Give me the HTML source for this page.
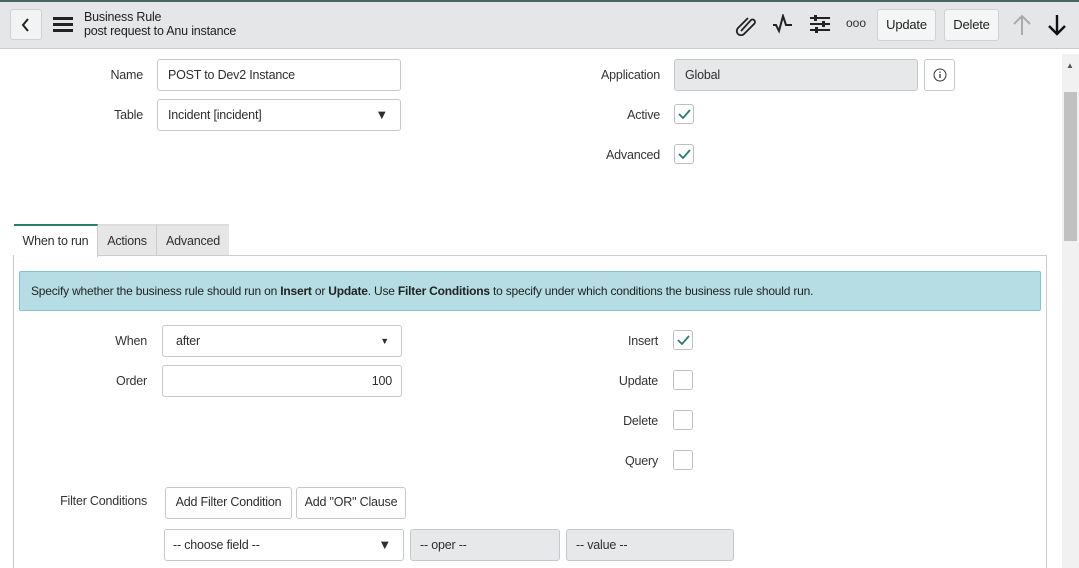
<!DOCTYPE html>
<html><head><style>
*{box-sizing:border-box;margin:0;padding:0}
html,body{width:1079px;height:568px;overflow:hidden}
body{background:#fff;font-family:"Liberation Sans",sans-serif;font-size:12px;color:#2e2e2e;position:relative;letter-spacing:-0.2px}
.a{position:absolute}
.hdr{left:0;top:0;width:1079px;height:49px;background:#e4e6e7;border-top:2px solid #4a6660;border-bottom:1px solid #c9cbcc}
.btn{position:absolute;background:#f4f5f5;border:1px solid #cfd1d2;border-radius:3px;text-align:center;font-size:13px;line-height:29px;color:#222}
.inp{position:absolute;height:32px;border:1px solid #c6c9cb;border-radius:3px;background:#fff;padding-left:10px;line-height:30px;font-size:12.5px}
.ro{background:#e6e8ea}
.lbl{position:absolute;text-align:right;font-size:12.5px;color:#333}
.cb{position:absolute;width:20px;height:20px;border:1px solid #bcc0c2;border-radius:3px;background:#fff}
.cb svg{position:absolute;left:3px;top:4px}
.tri{position:absolute;right:12px;top:0;font-size:11px}
.wb{position:absolute;background:#fff;border:1px solid #c6c9cb;border-radius:3px;text-align:center;line-height:29px;font-size:12.5px}
</style></head><body>
<div class="a hdr"></div>
<div class="btn" style="left:10px;top:9px;width:32px;height:31px;background:#f2f3f3"><svg width="12" height="14" viewBox="0 0 12 14" style="margin-top:8px"><path d="M8 1L3 7l5 6" stroke="#222" stroke-width="2" fill="none"/></svg></div>
<div class="a" style="left:53px;top:17px;width:20px;height:3px;background:#222"></div>
<div class="a" style="left:53px;top:23px;width:20px;height:3px;background:#222"></div>
<div class="a" style="left:53px;top:29px;width:20px;height:3px;background:#222"></div>
<div class="a" style="left:84px;top:10px;font-size:12.5px;line-height:14px;color:#222">Business Rule<br>post request to Anu instance</div>
<svg class="a" style="left:735px;top:14px" width="22" height="22" viewBox="0 0 22 22"><path d="M6 17L16 6a2.5 2.5 0 0 1 3.5 3.5L9 20a4 4 0 0 1-6-6L13 4" stroke="#222" stroke-width="1.8" fill="none"/></svg>
<svg class="a" style="left:772px;top:14px" width="22" height="20" viewBox="0 0 22 20"><path d="M1 11h3l3 6 4-15 3 9h6" stroke="#222" stroke-width="2" fill="none"/></svg>
<svg class="a" style="left:810px;top:14px" width="20" height="20" viewBox="0 0 20 20"><path d="M0 4h20M0 10h20M0 16h20" stroke="#222" stroke-width="2"/><rect x="4" y="1" width="3" height="6" fill="#222"/><rect x="12" y="7" width="3" height="6" fill="#222"/><rect x="5" y="13" width="3" height="6" fill="#222"/></svg>
<div class="a" style="left:846px;top:16px;font-size:12px;letter-spacing:0">ooo</div>
<div class="btn" style="left:877px;top:9px;width:59px;height:32px">Update</div>
<div class="btn" style="left:944px;top:9px;width:55px;height:32px">Delete</div>
<svg class="a" style="left:1012px;top:14px" width="20" height="22" viewBox="0 0 20 22"><path d="M10 21V2M2 10l8-8 8 8" stroke="#aaa" stroke-width="2" fill="none"/></svg>
<svg class="a" style="left:1047px;top:14px" width="20" height="22" viewBox="0 0 20 22"><path d="M10 1v19M2 12l8 8 8-8" stroke="#111" stroke-width="2.4" fill="none"/></svg>

<div class="a" style="left:1062px;top:54px;width:17px;height:514px;background:#f1f1f1"></div>
<div class="a" style="left:1066px;top:61px;font-size:8px;color:#555">▲</div>
<div class="a" style="left:1064px;top:92px;width:13px;height:149px;background:#c1c1c1"></div>

<div class="lbl" style="left:60px;top:68px;width:83px">Name</div>
<div class="inp" style="left:157px;top:59px;width:244px">POST to Dev2 Instance</div>
<div class="lbl" style="left:60px;top:108px;width:83px">Table</div>
<div class="inp" style="left:157px;top:99px;width:244px">Incident [incident]<span class="tri" style="font-size:13px">▼</span></div>
<div class="lbl" style="left:560px;top:68px;width:100px">Application</div>
<div class="inp ro" style="left:674px;top:59px;width:244px">Global</div>
<div class="wb" style="left:924px;top:59px;width:31px;height:32px"><svg width="14" height="14" viewBox="0 0 14 14" style="margin-top:8px"><circle cx="7" cy="7" r="6" stroke="#333" fill="none"/><path d="M7 6v4M7 3.5v1.3" stroke="#333" stroke-width="1.3"/></svg></div>
<div class="lbl" style="left:560px;top:108px;width:100px">Active</div>
<div class="cb" style="left:674px;top:104px"><svg width="13" height="10"><path d="M1 5l4 4 7-8" stroke="#2e7d6b" stroke-width="1.8" fill="none"/></svg></div>
<div class="lbl" style="left:560px;top:148px;width:100px">Advanced</div>
<div class="cb" style="left:674px;top:144px"><svg width="13" height="10"><path d="M1 5l4 4 7-8" stroke="#2e7d6b" stroke-width="1.8" fill="none"/></svg></div>

<div class="a" style="left:13px;top:255px;width:1034px;height:320px;border:1px solid #ccc"></div>
<div class="a" style="left:14px;top:224px;width:84px;height:33px;background:#fff;border-top:2px solid #2e7d6b;border-right:1px solid #ccc;line-height:31px;text-align:center;font-size:12.5px">When to run</div>
<div class="a" style="left:98px;top:224px;width:59px;height:31px;background:#e6e6e6;border-top:2px solid #ddd;border-right:1px solid #ccc;line-height:30px;text-align:center;font-size:12.5px">Actions</div>
<div class="a" style="left:157px;top:224px;width:72px;height:31px;background:#e6e6e6;border-top:2px solid #ddd;line-height:30px;text-align:center;font-size:12.5px">Advanced</div>
<div class="a" style="left:19px;top:271px;width:1022px;height:40px;background:#b5dde3;border:1px solid #84c3cc;border-radius:2px;padding-left:11px;line-height:38px;font-size:12px;color:#222">Specify whether the business rule should run on <b style="font-weight:600">Insert</b> or <b style="font-weight:600">Update</b>. Use <b style="font-weight:600">Filter Conditions</b> to specify under which conditions the business rule should run.</div>

<div class="lbl" style="left:60px;top:334px;width:87px">When</div>
<div class="inp" style="left:162px;top:325px;width:240px;padding-left:13px">after<span class="tri" style="font-size:9px">▼</span></div>
<div class="lbl" style="left:60px;top:374px;width:87px">Order</div>
<div class="inp" style="left:162px;top:365px;width:240px;text-align:right;padding-right:9px">100</div>
<div class="lbl" style="left:560px;top:334px;width:98px">Insert</div>
<div class="cb" style="left:673px;top:330px"><svg width="13" height="10"><path d="M1 5l4 4 7-8" stroke="#2e7d6b" stroke-width="1.8" fill="none"/></svg></div>
<div class="lbl" style="left:560px;top:374px;width:98px">Update</div>
<div class="cb" style="left:673px;top:370px"></div>
<div class="lbl" style="left:560px;top:414px;width:98px">Delete</div>
<div class="cb" style="left:673px;top:410px"></div>
<div class="lbl" style="left:560px;top:454px;width:98px">Query</div>
<div class="cb" style="left:673px;top:450px"></div>

<div class="lbl" style="left:30px;top:494px;width:117px">Filter Conditions</div>
<div class="wb" style="left:165px;top:487px;width:127px;height:32px">Add Filter Condition</div>
<div class="wb" style="left:296px;top:487px;width:110px;height:32px">Add "OR" Clause</div>
<div class="inp" style="left:164px;top:529px;width:240px;padding-left:8px">-- choose field --<span class="tri" style="font-size:13px">▼</span></div>
<div class="inp ro" style="left:410px;top:529px;width:150px;padding-left:9px">-- oper --</div>
<div class="inp ro" style="left:566px;top:529px;width:168px;padding-left:9px">-- value --</div>
</body></html>
